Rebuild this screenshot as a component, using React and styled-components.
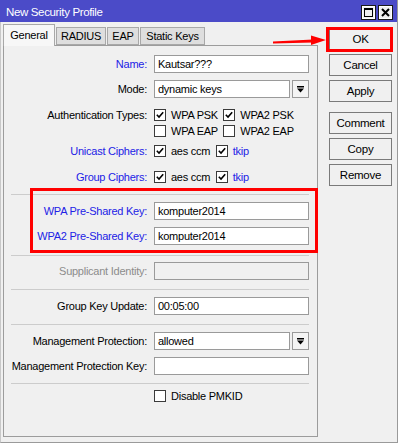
import React from "react";
import styled, { createGlobalStyle } from "styled-components";

const GlobalStyle = createGlobalStyle`
  html, body {
    margin: 0;
    padding: 0;
    background: #ffffff;
  }
  body {
    font-family: "Liberation Sans", Arial, sans-serif;
    font-size: 11px;
    letter-spacing: -0.25px;
    color: #000;
  }
`;

const Window = styled.div`
  position: relative;
  width: 398px;
  height: 443px;
  box-sizing: border-box;
  background: #f0f0f0;
  border-left: 1px solid #c8c8c8;
  border-right: 1px solid #9a9a9a;
  border-bottom: 1px solid #9a9a9a;
  display: flex;
  flex-direction: column;
`;

const TitleBar = styled.div`
  height: 22px;
  margin-left: -1px;
  background: #4b4bc8;
  color: #fff;
  display: flex;
  align-items: center;
  padding: 0 4px 0 6px;
  font-size: 11.5px;
  letter-spacing: -0.35px;
`;

const Title = styled.div`
  flex: 1;
  padding-top: 2px;
`;

const WinButton = styled.div`
  width: 15px;
  height: 15px;
  box-sizing: border-box;
  margin-left: 2px;
  margin-top: 2px;
  background: #f0f0f0;
  border: 1px solid #1a1a1a;
  box-shadow: inset 0 0 0 1px #fff;
  display: flex;
  align-items: center;
  justify-content: center;
`;

const Body = styled.div`
  flex: 1;
  display: flex;
  padding: 2px 0 0 2px;
`;

const LeftCol = styled.div`
  width: 315px;
  display: flex;
  flex-direction: column;
`;

const TabRow = styled.div`
  display: flex;
  align-items: flex-end;
  height: 21px;
  position: relative;
  z-index: 1;
`;

const Tab = styled.div`
  width: ${(p) => p.$w}px;
  height: ${(p) => (p.$active ? 22 : 18)}px;
  box-sizing: border-box;
  margin-bottom: ${(p) => (p.$active ? -1 : 0)}px;
  margin-right: 1px;
  border: 1px solid #a8a8a8;
  border-bottom: ${(p) => (p.$active ? "none" : "1px solid #a8a8a8")};
  background: ${(p) => (p.$active ? "#f7f7f7" : "#dedede")};
  display: flex;
  align-items: center;
  justify-content: center;
  padding-bottom: ${(p) => (p.$active ? 2 : 0)}px;
`;

const Panel = styled.div`
  height: 392px;
  box-sizing: border-box;
  border: 1px solid #9c9c9c;
  background: #f0f0f0;
  padding: 0 8px 0 7px;
`;

const Section = styled.div`
  display: flex;
  flex-direction: column;
  gap: ${(p) => p.$gap ?? 7}px;
  padding-top: ${(p) => p.$pt ?? 7}px;
  padding-bottom: ${(p) => p.$pb ?? 9}px;
  border-top: ${(p) => (p.$first ? "0" : "1px solid #cccccc")};
`;

const Row = styled.div`
  display: grid;
  grid-template-columns: 143px 155px;
  column-gap: 7px;
  align-items: center;
  height: ${(p) => p.$h ?? 18}px;
  margin-top: ${(p) => p.$mt ?? 0}px;
  margin-left: -7px;
`;

const Label = styled.div`
  text-align: right;
  white-space: nowrap;
  color: ${(p) =>
    p.$tone === "blue" ? "#2222e6" : p.$tone === "grey" ? "#8c8c8c" : "#000"};
`;

const Input = styled.div`
  height: 18px;
  box-sizing: border-box;
  flex: 1;
  min-width: 0;
  border: 1px solid #9a9a9a;
  background: ${(p) => (p.$disabled ? "#f0f0f0" : "#fff")};
  display: flex;
  align-items: center;
  padding-left: 3px;
  white-space: nowrap;
  overflow: hidden;
`;

const Combo = styled.div`
  display: flex;
  gap: 2px;
  height: 18px;
`;

const DropButton = styled.div`
  width: 17px;
  height: 18px;
  box-sizing: border-box;
  border: 1px solid #9a9a9a;
  background: #f4f4f4;
  display: flex;
  align-items: center;
  justify-content: center;
`;

const Checks = styled.div`
  display: flex;
  align-items: center;
`;

const CheckItem = styled.div`
  width: ${(p) => p.$w ?? 100}px;
  display: flex;
  align-items: center;
  gap: 5px;
  color: ${(p) => (p.$blue ? "#2222e6" : "#000")};
  white-space: nowrap;
`;

const Box = styled.div`
  width: 12px;
  height: 12px;
  box-sizing: border-box;
  border: 1px solid #3a3a3a;
  background: #fff;
  display: flex;
  align-items: center;
  justify-content: center;
  flex-shrink: 0;
`;

const RightCol = styled.div`
  display: flex;
  flex-direction: column;
  padding: 4px 0 0 11px;
`;

const Button = styled.div`
  width: 63px;
  height: 22px;
  box-sizing: border-box;
  margin-top: ${(p) => p.$mt ?? 0}px;
  border: 1px solid #7a7a7a;
  background: #f0f0f0;
  display: flex;
  align-items: center;
  justify-content: center;
  font-size: 11.5px;
`;

const RedBox = styled.div`
  position: absolute;
  left: ${(p) => p.$x}px;
  top: ${(p) => p.$y}px;
  width: ${(p) => p.$w}px;
  height: ${(p) => p.$h}px;
  box-sizing: border-box;
  border: 3px solid #ff0000;
  pointer-events: none;
`;

const Arrow = styled.svg`
  position: absolute;
  left: 270px;
  top: 33px;
`;

const Check = () => (
  <svg width="8" height="8" viewBox="0 0 8 8">
    <path d="M0.8 3.8 L3 6 L7.2 1.2" fill="none" stroke="#000" strokeWidth="1.6" />
  </svg>
);

const CheckBox = ({ checked, label, w, blue }) => (
  <CheckItem $w={w} $blue={blue}>
    <Box>{checked && <Check />}</Box>
    {label}
  </CheckItem>
);

const DropIcon = () => (
  <svg width="9" height="9" viewBox="0 0 9 9">
    <rect x="1" y="1" width="7" height="1.5" fill="#000" />
    <path d="M1 3.5 H8 L4.5 7.5 Z" fill="#000" />
  </svg>
);

const Select = ({ value }) => (
  <Combo>
    <Input>{value}</Input>
    <DropButton>
      <DropIcon />
    </DropButton>
  </Combo>
);

const Field = ({ label, tone, value, disabled }) => (
  <Row>
    <Label $tone={tone}>{label}</Label>
    <Input $disabled={disabled}>{value}</Input>
  </Row>
);

export default function App() {
  return (
    <>
      <GlobalStyle />
      <Window>
        <TitleBar>
          <Title>New Security Profile</Title>
          <WinButton>
            <svg width="9" height="9" viewBox="0 0 9 9">
              <rect x="0.5" y="0.5" width="8" height="8" fill="none" stroke="#000" />
              <rect x="0" y="0" width="9" height="2" fill="#000" />
            </svg>
          </WinButton>
          <WinButton>
            <svg width="9" height="9" viewBox="0 0 9 9">
              <path d="M1 1 L8 8 M8 1 L1 8" stroke="#000" strokeWidth="2" />
            </svg>
          </WinButton>
        </TitleBar>
        <Body>
          <LeftCol>
            <TabRow>
              <Tab $active $w={52}>General</Tab>
              <Tab $w={50}>RADIUS</Tab>
              <Tab $w={32}>EAP</Tab>
              <Tab $w={65}>Static Keys</Tab>
            </TabRow>
            <Panel>
              <Section $first $pt={9} $pb={8} $gap={0}>
                <Field label="Name:" tone="blue" value="Kautsar???" />
                <Row $mt={7}>
                  <Label>Mode:</Label>
                  <Select value="dynamic keys" />
                </Row>
                <Row $mt={9} $h={16}>
                  <Label>Authentication Types:</Label>
                  <Checks>
                    <CheckBox checked label="WPA PSK" w={81} />
                    <CheckBox checked label="WPA2 PSK" />
                  </Checks>
                </Row>
                <Row $h={16}>
                  <div />
                  <Checks>
                    <CheckBox label="WPA EAP" w={81} />
                    <CheckBox label="WPA2 EAP" />
                  </Checks>
                </Row>
                <Row $mt={3}>
                  <Label $tone="blue">Unicast Ciphers:</Label>
                  <Checks>
                    <CheckBox checked label="aes ccm" w={66} />
                    <CheckBox checked label="tkip" blue />
                  </Checks>
                </Row>
                <Row $mt={8}>
                  <Label $tone="blue">Group Ciphers:</Label>
                  <Checks>
                    <CheckBox checked label="aes ccm" w={66} />
                    <CheckBox checked label="tkip" blue />
                  </Checks>
                </Row>
              </Section>
              <Section $pt={7} $pb={10}>
                <Field label="WPA Pre-Shared Key:" tone="blue" value="komputer2014" />
                <Field label="WPA2 Pre-Shared Key:" tone="blue" value="komputer2014" />
              </Section>
              <Section $pt={6} $pb={9}>
                <Field label="Supplicant Identity:" tone="grey" value="" disabled />
              </Section>
              <Section $pt={7} $pb={9}>
                <Field label="Group Key Update:" value="00:05:00" />
              </Section>
              <Section $pt={7} $pb={8}>
                <Row>
                  <Label>Management Protection:</Label>
                  <Select value="allowed" />
                </Row>
                <Field label="Management Protection Key:" value="" />
              </Section>
              <Section $pt={4} $pb={0}>
                <Row $h={16}>
                  <div />
                  <Checks>
                    <CheckBox label="Disable PMKID" />
                  </Checks>
                </Row>
              </Section>
            </Panel>
          </LeftCol>
          <RightCol>
            <Button>OK</Button>
            <Button $mt={4}>Cancel</Button>
            <Button $mt={4}>Apply</Button>
            <Button $mt={10}>Comment</Button>
            <Button $mt={4}>Copy</Button>
            <Button $mt={4}>Remove</Button>
          </RightCol>
        </Body>
        <RedBox $x={325} $y={27} $w={67} $h={25} />
        <RedBox $x={29} $y={188} $w={288} $h={65} />
        <Arrow width="56" height="14" viewBox="0 0 56 14">
          <path d="M2 8.6 L42 6.4 L42 9.6 L2 10.4 Z" fill="#ff0000" />
          <path d="M40 2.5 L55 7 L40 12 Z" fill="#ff0000" />
        </Arrow>
      </Window>
    </>
  );
}
